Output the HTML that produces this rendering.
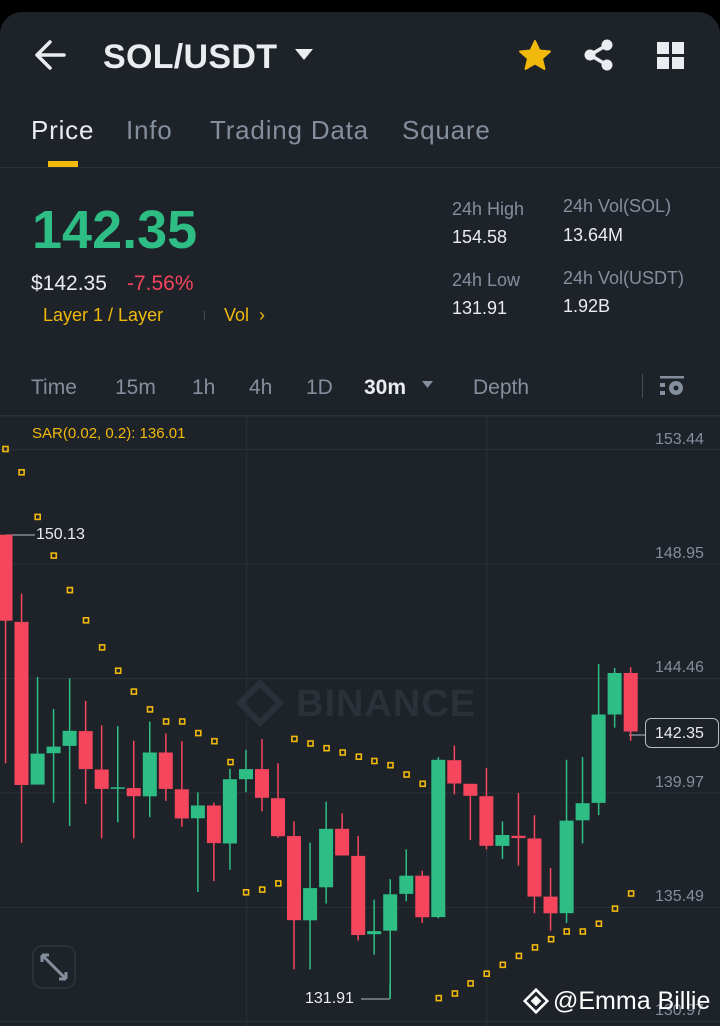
<!DOCTYPE html>
<html><head><meta charset="utf-8"><style>
*{margin:0;padding:0;box-sizing:border-box}
body{width:720px;height:1026px;background:#000;overflow:hidden;font-family:"Liberation Sans",sans-serif;position:relative}
.app{position:absolute;left:0;top:12px;width:720px;height:1014px;background:#1e2329;border-radius:22px 22px 0 0;overflow:hidden}
.t{position:absolute;white-space:nowrap;line-height:1}
.g{color:#848e9c}
</style></head><body>
<div class="app"></div>
<svg width="720" height="1026" style="position:absolute;left:0;top:0" xmlns="http://www.w3.org/2000/svg">
 <path d="M64 55H38M50 42L37 55L50 68" stroke="#eaecef" stroke-width="3.5" fill="none" stroke-linecap="round" stroke-linejoin="round"/>
 <path d="M295 49H313L304 60Z" fill="#eaecef"/>
 <path d="M535 41L539.5 50.5L550 51.5L542 58.5L544.5 69L535 63.5L525.5 69L528 58.5L520 51.5L530.5 50.5Z" fill="#f0b90b" stroke="#f0b90b" stroke-width="2" stroke-linejoin="round"/>
 <g fill="#eaecef"><circle cx="607" cy="45" r="5.5"/><circle cx="590" cy="55" r="5.5"/><circle cx="607" cy="65" r="5.5"/></g>
 <path d="M607 45L590 55L607 65" stroke="#eaecef" stroke-width="3.5" fill="none"/>
 <g fill="#eaecef"><rect x="657" y="42" width="12" height="12"/><rect x="672" y="42" width="12" height="12"/><rect x="657" y="57" width="12" height="12"/><rect x="672" y="57" width="12" height="12"/></g>
 <rect x="48" y="161" width="30" height="6" fill="#f0b90b"/>
 <rect x="0" y="167" width="720" height="1" fill="#2b3139"/>
 <rect x="0" y="415" width="720" height="1.5" fill="#2b3139"/>
 <rect x="642" y="374" width="1" height="24" fill="#474d57"/>
 <path d="M422 381H433L427.5 388Z" fill="#848e9c"/>
 <g fill="#848e9c"><rect x="660" y="376" width="24" height="2.5"/><rect x="660" y="383" width="5" height="4"/><rect x="660" y="391" width="5" height="4"/><circle cx="676" cy="388" r="7"/></g>
 <circle cx="676" cy="388" r="2.5" fill="#1e2329"/>
 <!-- watermark logo -->
 <g transform="translate(260,703) rotate(45)" fill="none" stroke="#2b3139" stroke-width="6"><rect x="-14" y="-14" width="28" height="28"/></g>
 <g id="chart"></g>
 <!-- expand icon -->
 <rect x="33" y="946" width="42" height="42" rx="9" fill="none" stroke="#2b3139" stroke-width="2"/>
 <path d="M42 955L66 979M42 955h7M42 955v7M66 979h-7M66 979v-7" stroke="#848e9c" stroke-width="3" fill="none"/>
 <g transform="translate(536,1001) rotate(45)" fill="none" stroke="#fff" stroke-width="2.5"><rect x="-8" y="-8" width="16" height="16"/><rect x="-2.5" y="-2.5" width="5" height="5" fill="#fff"/></g>
</svg>
<div class="t" style="left:103px;top:40px;font-size:34px;font-weight:bold;color:#eaecef;letter-spacing:0.3px">SOL/USDT</div>
<div class="t" style="left:31px;top:117px;font-size:26px;color:#eaecef;letter-spacing:0.8px">Price</div>
<div class="t g" style="left:126px;top:117px;font-size:26px;letter-spacing:0.8px">Info</div>
<div class="t g" style="left:210px;top:117px;font-size:26px;letter-spacing:0.8px">Trading Data</div>
<div class="t g" style="left:402px;top:117px;font-size:26px;letter-spacing:0.8px">Square</div>
<div class="t" style="left:32px;top:203px;font-size:54px;color:#2ebd85;font-weight:bold">142.35</div>
<div class="t" style="left:31px;top:273px;font-size:21px;color:#eaecef">$142.35</div>
<div class="t" style="left:127px;top:273px;font-size:21px;color:#f6465d">-7.56%</div>
<div class="t" style="left:43px;top:306px;font-size:18px;color:#f0b90b">Layer 1 / Layer</div>
<div style="position:absolute;left:204px;top:311px;width:1px;height:9px;background:#474d57"></div>
<div class="t" style="left:224px;top:306px;font-size:18px;color:#f0b90b">Vol &nbsp;›</div>
<div class="t g" style="left:452px;top:200px;font-size:18px">24h High</div>
<div class="t" style="left:452px;top:228px;font-size:18px;color:#eaecef">154.58</div>
<div class="t g" style="left:563px;top:197px;font-size:18px">24h Vol(SOL)</div>
<div class="t" style="left:563px;top:226px;font-size:18px;color:#eaecef">13.64M</div>
<div class="t g" style="left:452px;top:271px;font-size:18px">24h Low</div>
<div class="t" style="left:452px;top:299px;font-size:18px;color:#eaecef">131.91</div>
<div class="t g" style="left:563px;top:269px;font-size:18px">24h Vol(USDT)</div>
<div class="t" style="left:563px;top:297px;font-size:18px;color:#eaecef">1.92B</div>
<div class="t g" style="left:31px;top:377px;font-size:21px">Time</div>
<div class="t g" style="left:115px;top:377px;font-size:21px">15m</div>
<div class="t g" style="left:192px;top:377px;font-size:21px">1h</div>
<div class="t g" style="left:249px;top:377px;font-size:21px">4h</div>
<div class="t g" style="left:306px;top:377px;font-size:21px">1D</div>
<div class="t" style="left:364px;top:377px;font-size:21px;color:#eaecef;font-weight:bold">30m</div>
<div class="t g" style="left:473px;top:377px;font-size:21px">Depth</div>
<div class="t" style="left:32px;top:426px;font-size:15px;color:#f0b90b">SAR(0.02, 0.2): 136.01</div>
<div class="t" style="left:296px;top:685px;font-size:38px;font-weight:bold;color:#2b3139;letter-spacing:1px">BINANCE</div>
<div class="t g" style="left:655px;top:432px;font-size:16px">153.44</div>
<div class="t g" style="left:655px;top:546px;font-size:16px">148.95</div>
<div class="t g" style="left:655px;top:660px;font-size:16px">144.46</div>
<div class="t g" style="left:655px;top:775px;font-size:16px">139.97</div>
<div class="t g" style="left:655px;top:889px;font-size:16px">135.49</div>
<div class="t g" style="left:655px;top:1003px;font-size:16px">130.97</div>
<div class="t" style="left:36px;top:527px;font-size:16px;color:#eaecef">150.13</div>
<div class="t" style="left:305px;top:991px;font-size:16px;color:#eaecef">131.91</div>
<div style="position:absolute;left:645px;top:718px;width:74px;height:30px;border:1.5px solid #b7bdc6;border-radius:6px;background:#1e2329"></div>
<div class="t" style="left:655px;top:726px;font-size:16px;color:#eaecef">142.35</div>
<div class="t" style="left:553px;top:989px;font-size:25px;color:#fff">@Emma Billie</div>
<script>
(function(){
var kx=0.46,ky=0.3875,oy=419.2;
var X=function(x){return x*kx},Y=function(y){return oy+y*ky};
var s='';
[77,372,668,963,1259,1553].forEach(function(y){s+='<rect x="0" y="'+Y(y).toFixed(1)+'" width="720" height="1" fill="#2b3139"/>';});
[535,1057].forEach(function(x){s+='<rect x="'+X(x).toFixed(1)+'" y="416" width="1" height="610" fill="#2b3139"/>';});
s+='<line x1="6" y1="535" x2="35" y2="535" stroke="#b7bdc6" stroke-width="1"/>';
s+='<line x1="361" y1="999" x2="390" y2="999" stroke="#b7bdc6" stroke-width="1"/><line x1="390" y1="999" x2="390" y2="985" stroke="#2ebd85" stroke-width="1.5"/>';
s+='<line x1="629" y1="735" x2="645" y2="735" stroke="#b7bdc6" stroke-width="1"/>';
var c=[['r',298,520,298,888],['r',523,944,450,1093],['g',863,943,665,943],['g',845,862,748,990],['g',804,843,669,1050],['r',805,903,727,993],['r',904,954,790,1082],['g',950,954,792,1040],['r',952,973,830,1082],['g',860,973,780,1027],['r',860,954,811,985],['r',955,1030,831,1052],['g',997,1030,963,1220],['r',997,1094,990,1192],['g',929,1095,902,1163],['g',903,929,853,963],['r',903,977,825,1012],['r',978,1076,888,1080],['r',1076,1293,1038,1420],['g',1210,1293,1093,1420],['g',1057,1208,987,1250],['r',1057,1126,1017,1126],['r',1127,1331,1075,1345],['g',1321,1329,1240,1382],['g',1226,1320,1187,1494],['g',1178,1225,1110,1244],['r',1178,1285,1165,1300],['g',879,1285,872,1288],['r',880,940,842,968],['r',941,972,941,1086],['r',973,1101,900,1110],['g',1073,1101,1038,1135],['r',1075,1081,965,1152],['r',1082,1232,1022,1275],['r',1232,1275,1158,1320],['g',1036,1275,879,1300],['g',991,1035,872,1095],['g',762,990,632,1022],['g',655,762,642,796],['r',655,806,640,830]];
c.forEach(function(d,i){var cx=5.5+16.03*i;var col=d[0]=='r'?'#f6465d':'#2ebd85';
 s+='<rect x="'+(cx-0.75).toFixed(1)+'" y="'+Y(d[3]).toFixed(1)+'" width="1.5" height="'+(Y(d[4])-Y(d[3])).toFixed(1)+'" fill="'+col+'"/>';
 var t=Y(d[1]),b=Y(d[2]);if(b-t<1.5)b=t+1.5;
 s+='<rect x="'+(cx-7).toFixed(1)+'" y="'+t.toFixed(1)+'" width="14" height="'+(b-t).toFixed(1)+'" fill="'+col+'"/>';});
var p=[[12,77],[47,137],[82,252],[117,352],[152,441],[187,519],[222,589],[257,649],[291,703],[326,749],[361,780],[396,780],[431,810],[466,831],[501,885],[535,1221],[570,1214],[605,1198],[640,825],[675,837],[710,849],[745,860],[780,871],[814,882],[849,893],[884,917],[919,941],[954,1494],[989,1482],[1023,1456],[1058,1431],[1093,1408],[1128,1385],[1163,1363],[1198,1342],[1232,1322],[1267,1322],[1302,1302],[1337,1263],[1372,1224]];
p.forEach(function(q){s+='<rect x="'+(X(q[0])-2.5).toFixed(1)+'" y="'+(Y(q[1])-2.5).toFixed(1)+'" width="5" height="5" fill="none" stroke="#f0b90b" stroke-width="1.6"/>';});
document.getElementById('chart').innerHTML=s;
})();
</script>
</body></html>
